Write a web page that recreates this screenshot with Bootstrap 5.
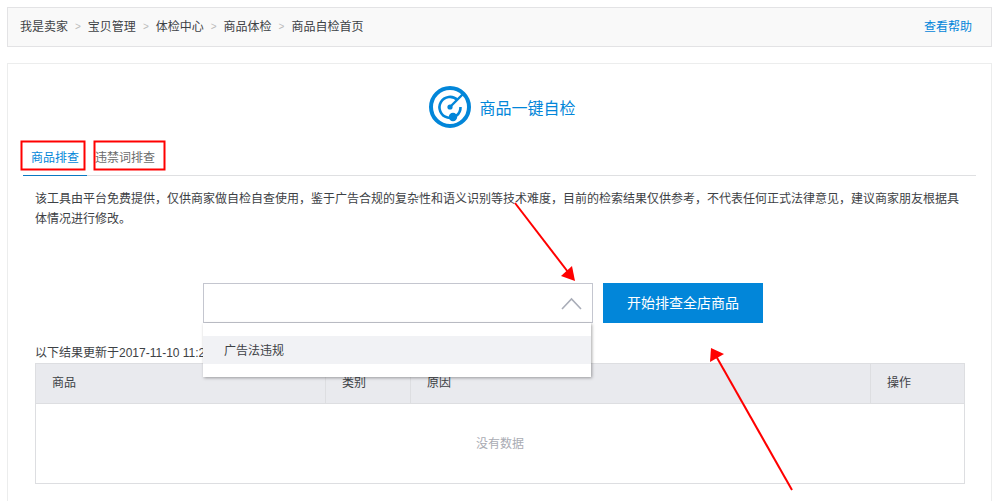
<!DOCTYPE html>
<html lang="zh">
<head>
<meta charset="utf-8">
<title>商品一键自检</title>
<link href="https://cdn.jsdelivr.net/npm/bootstrap@5.3.0/dist/css/bootstrap.min.css" rel="stylesheet">
<style>
html,body{height:100%;overflow:hidden}
body{font-family:"Liberation Sans","Noto Sans CJK SC",sans-serif;font-size:12px;color:#3d4145;background:#fff;padding:7px 13px 0 7px;position:relative}
.crumbbar{height:40px;background:#f9f9f9;border:1px solid #e3e3e5;padding:0 19px 0 12px;margin-bottom:16px}
.crumbbar .breadcrumb{--bs-breadcrumb-margin-bottom:0;--bs-breadcrumb-divider:">";--bs-breadcrumb-divider-color:#bbb;--bs-breadcrumb-item-padding-x:7px;--bs-breadcrumb-item-active-color:#3d4145;font-size:12px}
.crumbbar .breadcrumb-item+.breadcrumb-item::before{padding-right:7px;font-size:10px;line-height:18px}
.crumbbar a{color:#0286d9;text-decoration:none}
.panel-box{border:1px solid #eceded;border-bottom:0;padding:21px 15px 0 15px;min-height:0}
.tool-title{height:44px;color:#0286d9;font-size:16px;gap:7px;margin-bottom:12px;padding-left:5px}
.tool-title span{padding-top:4px}
.tabbar{--bs-nav-tabs-border-color:#dfe0e2;--bs-nav-tabs-border-width:1px;height:35px;border-bottom-width:1px;margin-bottom:13px}
.tabbar .nav-link{border:0;margin:0;border-radius:0;padding:0;font-size:12px;height:35px;line-height:34px;color:#6b6b6b;background:none}
.tabbar .tab-first{width:64px;padding-left:8px;margin-right:8px}
.tabbar .nav-link.active{color:#0286d9;border-bottom:1px solid #0a78c2;margin-bottom:-1px;background:none}
.intro{margin:0 12px;line-height:20px;height:94px}
.scan-row{height:40px;margin-left:180px;gap:10px;position:relative}
.pick-box{width:390px;height:40px;border:1px solid #c4c6cf;background:#fff;padding-right:10px}
.scan-btn{--bs-btn-bg:#0286d9;--bs-btn-border-color:#0286d9;--bs-btn-hover-bg:#0286d9;--bs-btn-color:#fff;--bs-btn-border-radius:0;--bs-btn-font-size:14px;width:160px;height:40px;padding:0}
.pick-menu{--bs-dropdown-border-radius:0;--bs-dropdown-border-width:0;--bs-dropdown-min-width:388px;--bs-dropdown-padding-y:13px;--bs-dropdown-font-size:12px;--bs-dropdown-link-color:#3d4145;--bs-dropdown-item-padding-x:21px;--bs-dropdown-item-padding-y:0;position:absolute;top:40px;left:0;width:388px;height:54px;display:block;box-shadow:1px 1px 3px rgba(0,0,0,.35);z-index:5}
.pick-menu .dropdown-item{height:28px;line-height:30px;background:#f1f2f5}
.stamp{margin:21px 0 1px 12px;line-height:18px;height:18px;color:#3d4145}
.result-box{width:930px;margin-left:12px;border:1px solid #dddee1;height:121px}
.result-head{height:40px;background:#e9eaee;border-bottom:1px solid #dddee1}
.result-head>div{padding-left:16px;line-height:38px;border-right:1px solid #dddee1}
.result-head>div:last-child{border-right:0;flex:1}
.cg1{width:290px}.cg2{width:85px}.cg3{width:460px}
.no-data{height:79px;color:#a9abb3}
.note-layer{position:absolute;left:0;top:0;width:1005px;height:501px;pointer-events:none;z-index:9}
</style>
</head>
<body class="d-flex flex-column">
<div class="crumbbar d-flex align-items-center justify-content-between flex-shrink-0">
  <ol class="breadcrumb">
    <li class="breadcrumb-item">我是卖家</li>
    <li class="breadcrumb-item">宝贝管理</li>
    <li class="breadcrumb-item">体检中心</li>
    <li class="breadcrumb-item">商品体检</li>
    <li class="breadcrumb-item active">商品自检首页</li>
  </ol>
  <a href="#">查看帮助</a>
</div>
<div class="panel-box flex-grow-1">
  <div class="tool-title d-flex align-items-center justify-content-center">
    <svg width="44" height="44" viewBox="0 0 44 44" fill="none">
      <circle cx="22" cy="22" r="19" stroke="#0286d9" stroke-width="4"/>
      <path d="M29.5 15A10.5 10.5 0 1 0 32.5 22" stroke="#0286d9" stroke-width="2.6"/>
      <path d="M22 22L36 8" stroke="#0286d9" stroke-width="2.4"/>
      <circle cx="22" cy="22" r="2.6" fill="#0286d9"/>
      <circle cx="25" cy="32" r="4.2" fill="#0286d9"/>
    </svg>
    <span>商品一键自检</span>
  </div>
  <ul class="nav nav-tabs tabbar">
    <li class="nav-item"><a class="nav-link active tab-first" href="#">商品排查</a></li>
    <li class="nav-item"><a class="nav-link" href="#">违禁词排查</a></li>
  </ul>
  <p class="intro">该工具由平台免费提供，仅供商家做自检自查使用，鉴于广告合规的复杂性和语义识别等技术难度，目前的检索结果仅供参考，不代表任何正式法律意见，建议商家朋友根据具体情况进行修改。</p>
  <div class="scan-row d-flex">
    <div class="pick-box d-flex align-items-center justify-content-end">
      <svg width="21" height="13" viewBox="0 0 21 13" fill="none"><path d="M1 12L10.5 2L20 12" stroke="#a9adb8" stroke-width="1.6"/></svg>
    </div>
    <button type="button" class="btn scan-btn">开始排查全店商品</button>
    <div class="dropdown-menu pick-menu"><a class="dropdown-item" href="#">广告法违规</a></div>
  </div>
  <div class="stamp">以下结果更新于2017-11-10 11:20:36</div>
  <div class="result-box">
    <div class="result-head d-flex">
      <div class="cg1">商品</div><div class="cg2">类别</div><div class="cg3">原因</div><div>操作</div>
    </div>
    <div class="no-data d-flex align-items-center justify-content-center">没有数据</div>
  </div>
</div>
<svg class="note-layer" viewBox="0 0 1005 501" fill="none">
  <rect x="21.5" y="141.5" width="63" height="28" stroke="#f00" stroke-width="2"/>
  <rect x="94.5" y="141.5" width="70" height="28" stroke="#f00" stroke-width="2"/>
  <path d="M515 203L568 272" stroke="#f00" stroke-width="2"/>
  <polygon points="575,281 561,276 572,266" fill="#f00"/>
  <path d="M792 490L716 356" stroke="#f00" stroke-width="2"/>
  <polygon points="711,348 710,362 724,354" fill="#f00"/>
</svg>
<script src="https://cdn.jsdelivr.net/npm/bootstrap@5.3.0/dist/js/bootstrap.bundle.min.js"></script>
</body>
</html>
